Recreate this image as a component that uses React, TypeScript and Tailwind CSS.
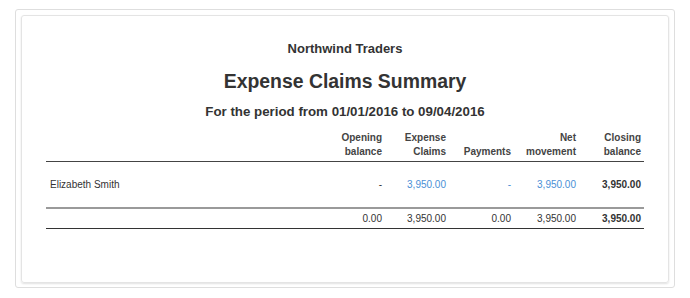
import React from 'react';

const cols = 'grid grid-cols-[1fr_65px_64px_65px_65px_68px]';

const App: React.FC = () => {
  return (
    <div className="w-[690px] h-[298px] bg-white pt-[9px] px-[15px] font-['Liberation_Sans',Arial,sans-serif] text-[#333]">
      <div className="w-[660px] h-[279px] border border-[#dedede] rounded-[3px] p-[5px]">
        <div className="h-[268px] border border-[#e4e4e4] rounded-[3px] shadow-[0_1px_2px_rgba(0,0,0,0.12)] px-[24px] pt-[25px]">
          <div className="text-center text-[13px] leading-4 font-bold text-[#333]">Northwind Traders</div>
          <div className="text-center text-[19.4px] leading-6 font-bold mt-[12px] text-[#333]">Expense Claims Summary</div>
          <div className="text-center text-[13.3px] leading-[18px] font-bold mt-[10px] text-[#333]">
            For the period from 01/01/2016 to 09/04/2016
          </div>

          <div className="mt-[10px] text-[10px]">
            {/* header */}
            <div className={`${cols} font-bold leading-[14px] text-[#444] border-b border-[#444] pb-[2px]`}>
              <div />
              <div className="text-right">Opening<br />balance</div>
              <div className="text-right">Expense<br />Claims</div>
              <div className="text-right flex items-end justify-end">Payments</div>
              <div className="text-right">Net<br />movement</div>
              <div className="text-right pr-[3px]">Closing<br />balance</div>
            </div>

            {/* row */}
            <div className={`${cols} h-[47px] items-center leading-[14px] border-b-2 border-[#9a9a9a]`}>
              <div className="pl-[4px]">Elizabeth Smith</div>
              <div className="text-right">-</div>
              <div className="text-right text-[#4a8fd6]">3,950.00</div>
              <div className="text-right text-[#4a8fd6]">-</div>
              <div className="text-right text-[#4a8fd6]">3,950.00</div>
              <div className="text-right pr-[3px] font-bold">3,950.00</div>
            </div>

            {/* total */}
            <div className={`${cols} h-[20px] items-center leading-[14px] border-b border-[#333]`}>
              <div />
              <div className="text-right">0.00</div>
              <div className="text-right">3,950.00</div>
              <div className="text-right">0.00</div>
              <div className="text-right">3,950.00</div>
              <div className="text-right pr-[3px] font-bold">3,950.00</div>
            </div>
          </div>
        </div>
      </div>
    </div>
  );
};

export default App;
